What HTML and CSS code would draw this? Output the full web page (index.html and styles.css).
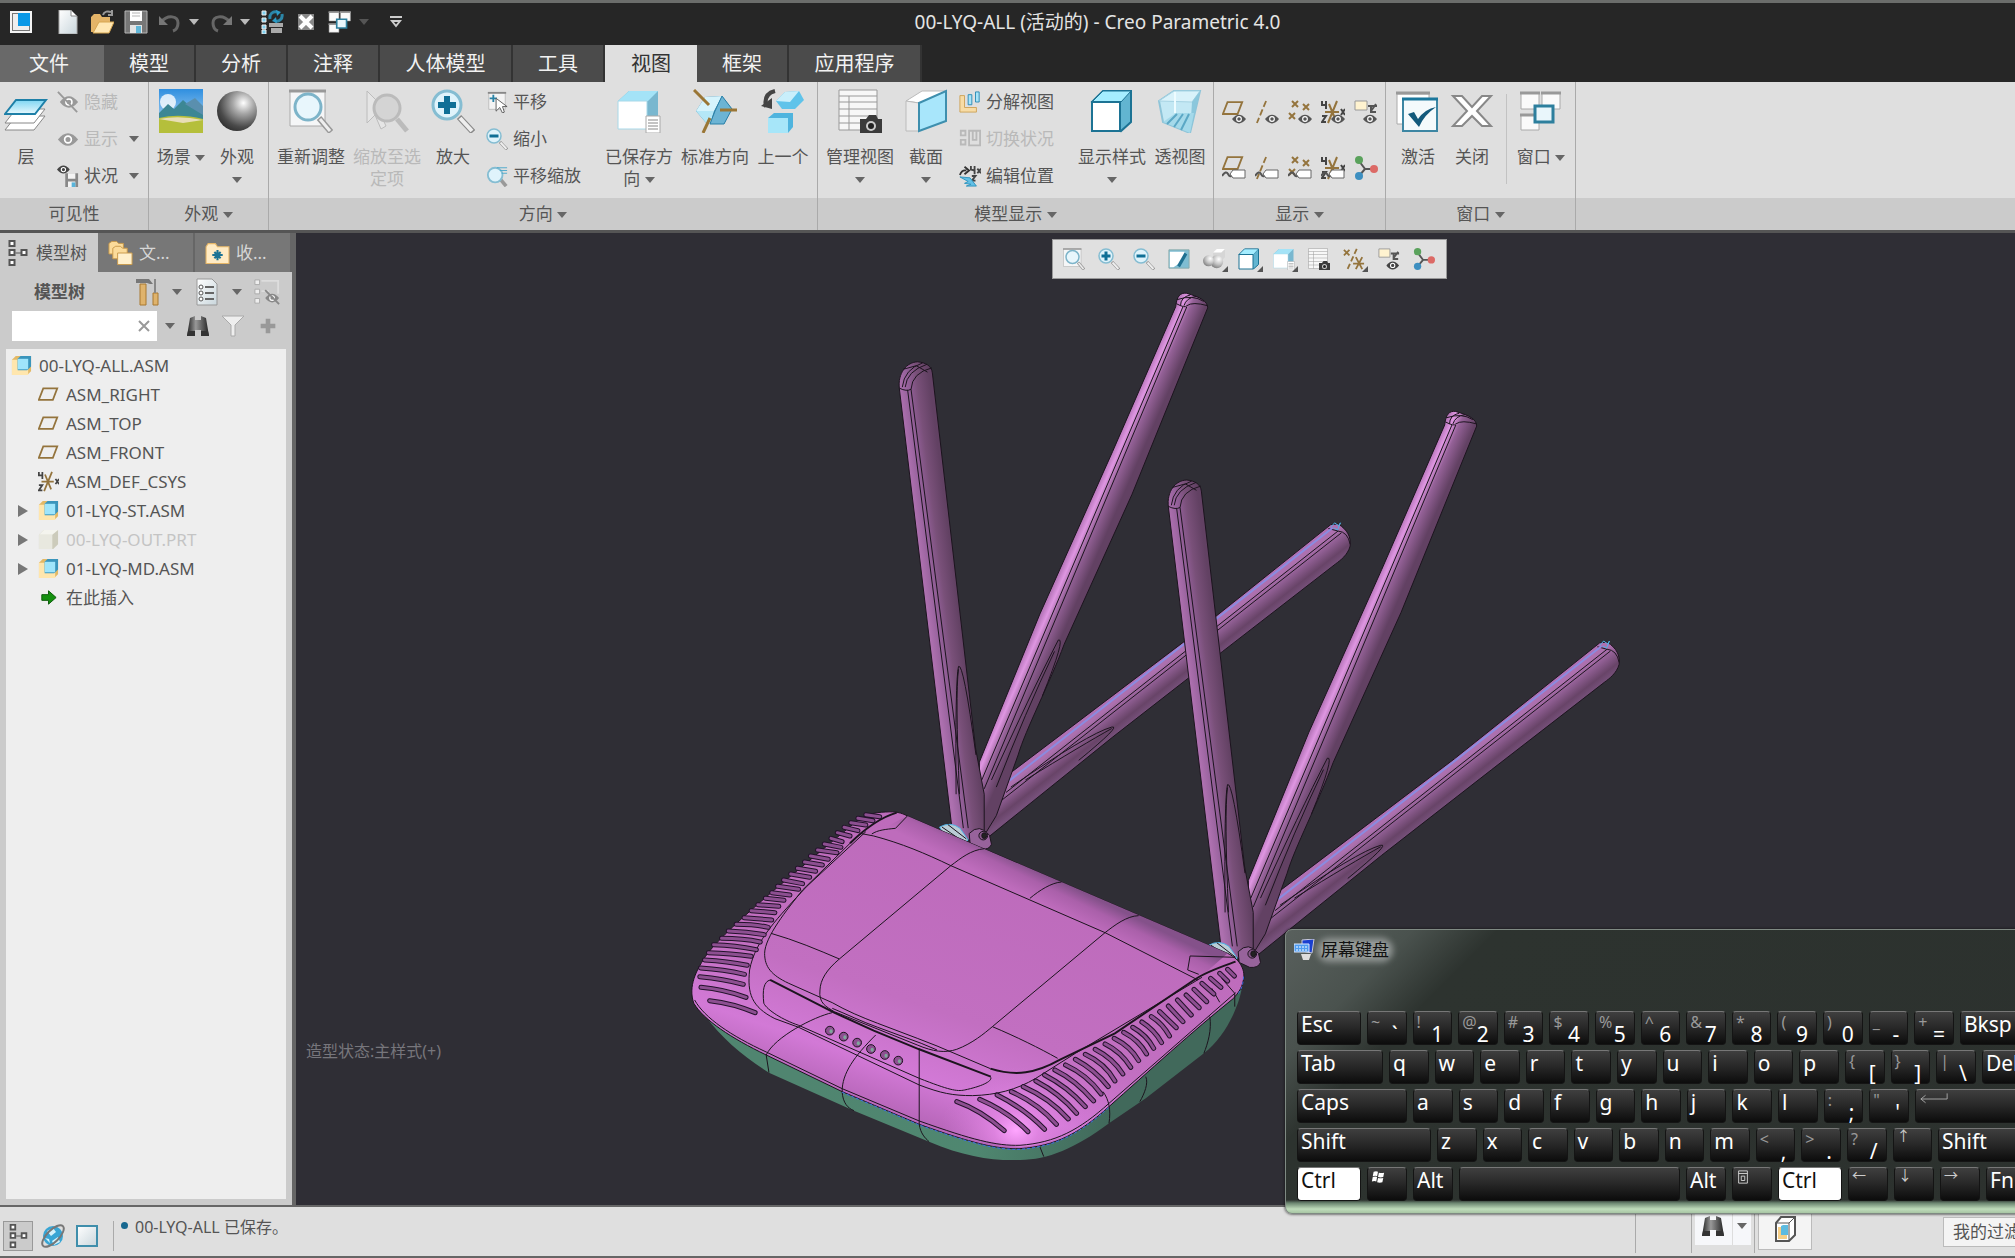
FILE: index.html
```html
<!DOCTYPE html>
<html lang="zh-CN">
<head>
<meta charset="utf-8">
<title>00-LYQ-ALL (活动的) - Creo Parametric 4.0</title>
<link rel="stylesheet" href="styles.css">
</head>
<body>
<svg class="defs" aria-hidden="true">
  <defs>
    <linearGradient id="gBlue" x1="0" y1="0" x2="0" y2="1"><stop offset="0" stop-color="#7fd6f3"/><stop offset="1" stop-color="#e8f8fd"/></linearGradient>
    <linearGradient id="gPaper" x1="0" y1="0" x2="1" y2="1"><stop offset="0" stop-color="#fff"/><stop offset="1" stop-color="#c9d6dc"/></linearGradient>
    <linearGradient id="gSky" x1="0" y1="0" x2="0" y2="1"><stop offset="0" stop-color="#2f8fe0"/><stop offset="1" stop-color="#cfe6f5"/></linearGradient>
    <radialGradient id="gBall" cx=".66" cy=".3" r=".75"><stop offset="0" stop-color="#fff"/><stop offset=".35" stop-color="#a8a8a8"/><stop offset=".8" stop-color="#4a4a4a"/><stop offset="1" stop-color="#333"/></radialGradient>
    <radialGradient id="gBallLite" cx=".66" cy=".3" r=".8"><stop offset="0" stop-color="#fff"/><stop offset=".5" stop-color="#c4c4c4"/><stop offset="1" stop-color="#777"/></radialGradient>
    <linearGradient id="gBin" x1="0" y1="0" x2="1" y2="0"><stop offset="0" stop-color="#222"/><stop offset=".4" stop-color="#999"/><stop offset="1" stop-color="#222"/></linearGradient>
    <symbol id="eye" viewBox="0 0 24 16"><path d="M0 8Q12-7 24 8Q12 23 0 8Z" fill="currentColor"/><circle cx="12" cy="8" r="4" fill="currentColor" stroke="#fff" stroke-width="2"/></symbol>
    <symbol id="creo" viewBox="0 0 24 24"><path d="M1 1h22v22H1z" fill="#f4f4f4"/><path d="M3 3h18v18H3z" fill="#777"/><path d="M4 4h16v16H4z" fill="#eee"/><path d="M9 3h12v13H9z" fill="#0a98e6"/></symbol>
    <symbol id="doc" viewBox="0 0 24 24"><path d="M3 0h12l6 6v18H3z" fill="url(#gPaper)" stroke="#aaa"/><path d="M15 0v6h6z" fill="#fff" stroke="#888"/></symbol>
    <symbol id="open" viewBox="0 0 24 24"><path d="M1 22V7l3-3h6l2 3h8v15z" fill="#e4b468"/><path d="M3 23l6-11h15l-5 11z" fill="#ffe7b3" stroke="#d7a650"/><path d="M13 5c1-4 5-4 8-3M22 0v5h-4" fill="none" stroke="#999" stroke-width="2"/></symbol>
    <symbol id="save" viewBox="0 0 24 24"><path d="M1 1h22v22H1z" fill="#777" stroke="#b5b5b5"/><path d="M6 1h12v10H6z" fill="#fff"/><path d="M8 3h8M8 6h8" stroke="#b5b5b5"/><path d="M6 15h12v8H6z" fill="#e4e4e4"/><path d="M12 16h5v7h-5z" fill="#62b7d8"/></symbol>
    <symbol id="undo" viewBox="0 0 24 24"><path d="M3 12C10 4 20 6 20 13c0 4-2 7-5 8" fill="none" stroke="#666" stroke-width="3"/><path d="M1 6v9h9z" fill="#777"/></symbol>
    <symbol id="redo" viewBox="0 0 24 24"><path d="M21 12C14 4 4 6 4 13c0 4 2 7 5 8" fill="none" stroke="#666" stroke-width="3"/><path d="M23 6v9h-9z" fill="#777"/></symbol>
    <symbol id="regen" viewBox="0 0 24 24"><path d="M2 1h4v4H2zM2 8h4v4H2zM2 15h4v4H2zM2 20h4v4H2z" fill="#7ed0ef" stroke="#eee"/><path d="M9 13h14v4H9zM11 18h11v5H11z" fill="#aaa"/><path d="M10 9c-1-5 3-8 7-7M22 4c1 5-3 8-7 7" fill="none" stroke="#2c86a8" stroke-width="3"/><path d="M16 0l5 2-4 4zM16 7l-4 4 5 2z" fill="#2c9bc6"/></symbol>
    <symbol id="winx" viewBox="0 0 24 24"><path d="M4 4h16v16H4z" fill="#888"/><path d="M6 6l12 12M18 6L6 18" stroke="#fff" stroke-width="4"/></symbol>
    <symbol id="wins" viewBox="0 0 44 44"><g fill="#fafafa" stroke="#aaa"><path d="M2 4h18v16H2zM23 4h18v16H23zM2 26h18v15H2z"/></g><path d="M1 4h20M22 4h20M1 26h20" stroke="#999" stroke-width="3"/><path d="M16 17h18v16H16z" fill="#e9f6fb" stroke="#2d7f9d" stroke-width="3"/></symbol>
    <symbol id="layers" viewBox="0 0 44 44"><g fill="#fff" stroke="#888"><path d="M12 27h29L30 41H1z"/><path d="M12 20h29L30 34H1z"/></g><path d="M12 11h30L31 25H1z" fill="url(#gBlue)" stroke="#1e80a8" stroke-width="2"/></symbol>
    <symbol id="hide" viewBox="0 0 24 24"><g color="#999"><use href="#eye" x="3" y="5" width="20" height="14"/></g><path d="M1 1l21 22" stroke="#999" stroke-width="2"/></symbol>
    <symbol id="show" viewBox="0 0 24 24"><g color="#999"><use href="#eye" x="1" y="5" width="22" height="15"/></g></symbol>
    <symbol id="state" viewBox="0 0 24 24"><g color="#444"><use href="#eye" x="0" y="0" width="14" height="10"/></g><path d="M9 9h14v15H9z" fill="#888"/><path d="M12 9h8v6h-8zM12 18h8v6h-8z" fill="#f4f4f4"/><path d="M16 19h4v5h-4z" fill="#59b4da"/></symbol>
    <symbol id="scene" viewBox="0 0 44 44"><path d="M0 0h44v44H0z" fill="url(#gSky)"/><circle cx="9" cy="13" r="8" fill="#fff" opacity=".8"/><path d="M0 24l9-9 6 5 9-9 9 8 6-5 5 5v15H0z" fill="#3c8794"/><path d="M26 15l10-6 8 8v9z" fill="#5a8fae"/><path d="M0 29q20-5 44 1v14H0z" fill="#b5bf3b"/><path d="M0 30q20-4 44 1l-20 3z" fill="#e8deb6"/></symbol>
    <symbol id="ball" viewBox="0 0 44 44"><circle cx="22" cy="22" r="20" fill="url(#gBall)"/></symbol>
    <symbol id="refit" viewBox="0 0 44 44"><path d="M1 2h35v35H1z" fill="#f5f6f7" stroke="#aaa"/><path d="M0 2h37" stroke="#999" stroke-width="3"/><path d="M30 29l12 14" stroke="#999" stroke-width="6"/><path d="M31 30l10 12" stroke="#eee" stroke-width="3"/><circle cx="19" cy="18" r="13" fill="#e8f6fc" stroke="#7db4c9" stroke-width="3"/></symbol>
    <symbol id="refitsel" viewBox="0 0 44 44"><path d="M2 2v32l8-8 6 14 5-3-6-13h9z" fill="#e5e5e5" stroke="#bcbcbc"/><path d="M32 30l10 12" stroke="#bbb" stroke-width="5"/><circle cx="22" cy="19" r="13" fill="#d4d4d4" stroke="#bbb" stroke-width="3"/></symbol>
    <symbol id="zin" viewBox="0 0 44 44"><path d="M28 28l14 15" stroke="#888" stroke-width="6"/><path d="M29 29l12 13" stroke="#eee" stroke-width="4"/><circle cx="16" cy="16" r="14" fill="#dff3fb" stroke="#85bdd2" stroke-width="3"/><path d="M16 7v18M7 16h18" stroke="#0f6f96" stroke-width="6"/></symbol>
    <symbol id="zout" viewBox="0 0 44 44"><path d="M28 28l14 15" stroke="#888" stroke-width="6"/><path d="M29 29l12 13" stroke="#eee" stroke-width="4"/><circle cx="16" cy="16" r="14" fill="#dff3fb" stroke="#85bdd2" stroke-width="3"/><path d="M7 16h18" stroke="#0f6f96" stroke-width="6"/></symbol>
    <symbol id="pan" viewBox="0 0 24 24"><path d="M3 2h18v18H3z" fill="#f4f4f4" stroke="#bbb"/><path d="M2 2h20" stroke="#888" stroke-width="2"/><path d="M8 4v8M4 8h8" stroke="#2b83a6" stroke-width="2"/><path d="M11 8v14l4-4 3 6 2-1-2-6h5z" fill="#fff" stroke="#555"/></symbol>
    <symbol id="panzoom" viewBox="0 0 24 24"><path d="M16 16l6 7" stroke="#999" stroke-width="4"/><circle cx="10" cy="11" r="8" fill="#dff3fb" stroke="#85bdd2" stroke-width="2"/><path d="M12 3h11M15 6h8M17 9h6" stroke="#49a7cb"/></symbol>
    <symbol id="saved" viewBox="0 0 44 44"><path d="M1 12L12 2h29v30l-10 8z" fill="#79b7cf"/><path d="M1 12L12 2h29l-10 10z" fill="#a4e3f7"/><path d="M1 12h29v28H1z" fill="#fff" stroke="#a8d8e8"/><path d="M29 27h14v17H29z" fill="#fff" stroke="#aaa"/><path d="M31 31h10M31 34h10M31 37h10M31 40h10" stroke="#888"/></symbol>
    <symbol id="stdori" viewBox="0 0 44 44"><path d="M3 22L12 8l17-1 10 13-8 15H14z" fill="#3a87ae"/><path d="M3 22L12 8l17-1-8 15z" fill="#d5f3fc"/><path d="M3 22h18l-4 13h-3z" fill="#b4e7f7"/><path d="M29 7l10 13-8 15H17l5-13z" fill="#6cb4d4" stroke="#2b81a8"/><path d="M1 1l15 15M27 21h18M17 29l-7 15" stroke="#9a7635" stroke-width="3"/></symbol>
    <symbol id="prev" viewBox="0 0 44 44"><path d="M14 2C6 4 3 9 5 18" fill="none" stroke="#444" stroke-width="4"/><path d="M0 17l11 3V9z" fill="#444"/><path d="M15 12l9-9 14-1 5 9-9 9H21z" fill="#5fc3ea"/><path d="M15 12l9-9 14-1-9 11z" fill="#c9effb"/><path d="M7 29l6-5h19v14l-5 6H7z" fill="#4fb4de"/><path d="M7 29h20v15H7z" fill="#a7e6f9"/></symbol>
    <symbol id="mgview" viewBox="0 0 44 44"><path d="M1 1h38v40H1z" fill="#f7f7f7" stroke="#999"/><path d="M1 7h38M1 13h38M1 20h38M1 27h38M1 34h38M11 7v34" stroke="#999"/><path d="M22 30h6l3-4h7l2 4h4v14H22z" fill="#3b3b3b"/><circle cx="33" cy="37" r="5" fill="#ccc"/><circle cx="33" cy="37" r="3" fill="#222"/></symbol>
    <symbol id="section" viewBox="0 0 44 44"><path d="M2 12L18 2h24L15 14z" fill="#fff" stroke="#bbb"/><path d="M2 12l13 2v28H2z" fill="#eaeaea" stroke="#bbb"/><path d="M15 14L42 2v30L15 42z" fill="#a8e6fb" stroke="#3e8fae" stroke-width="2"/></symbol>
    <symbol id="explode" viewBox="0 0 24 24"><path d="M1 5h5v13h13v5H1z" fill="#f7dca6" stroke="#cda256"/><path d="M10 4h4v11h-4zM18 1h4v11h-4z" fill="#a8e4f8" stroke="#2789b3"/></symbol>
    <symbol id="switchst" viewBox="0 0 24 24"><g fill="none" stroke="#b9b9b9" stroke-width="2"><path d="M2 3h5v5H2zM2 13h5v5H2zM11 3h12v16H11zM15 3v10h4V3"/></g></symbol>
    <symbol id="editpos" viewBox="0 0 24 24"><path d="M1 11q2-6 7-5M6 2l5 4-5 4" fill="none" stroke="#333" stroke-width="2"/><path d="M13 1v4l4 1V1M17 4v6M14 12h4l-4 5h4M20 4l4 5M24 4l-4 5" fill="none" stroke="#444" stroke-width="2"/><path d="M1 13l11 1 7 9H8l5-2-7-1 4-2z" fill="#63c0e6" stroke="#2c93bd"/></symbol>
    <symbol id="cube" viewBox="0 0 44 44"><path d="M2 13L13 2h28v31L31 42z" fill="#62b5d1" stroke="#1c7394" stroke-width="2"/><path d="M2 13L13 2h28L31 13z" fill="#a5edff" stroke="#1c7394"/><path d="M2 13h28v29H2z" fill="#fff" stroke="#1c7394" stroke-width="2"/></symbol>
    <symbol id="persp" viewBox="0 0 44 44"><path d="M1 12L16 2h26l-10 42-27-11z" fill="#c3e8f4" stroke="#8ec4d8" stroke-width="2"/><path d="M1 12L16 2h26l-8 11z" fill="#d9f2fa" stroke="#a6d3e3"/><path d="M34 13l8-11-10 42z" fill="#8bc7dc"/><path d="M5 33l13-9h18l-4 20z" fill="#a4d9ea"/><path d="M9 35l10-10M16 38l9-13M23 41l8-16" stroke="#5ba7c5" stroke-width="2"/><path d="M17 3v21" stroke="#eefcff" stroke-width="2"/></symbol>
    <symbol id="tag" viewBox="0 0 24 12"><path d="M0 8q4-6 6-2t5 1" fill="none" stroke="#555" stroke-width="2"/><path d="M11 2h12v8H11l-3-4z" fill="#fff" stroke="#666"/></symbol>
    <symbol id="plane" viewBox="0 0 24 16"><path d="M6 1h16l-5 13H1z" fill="none" stroke="#94743d" stroke-width="2"/></symbol>
    <symbol id="axis" viewBox="0 0 12 24"><path d="M11 0L1 24" stroke="#94743d" stroke-width="2" stroke-dasharray="7 3"/></symbol>
    <symbol id="pts" viewBox="0 0 24 24"><path d="M4 1l6 6M10 1l-6 6M15 4l6 6M21 4l-6 6M1 13l6 6M7 13l-6 6" stroke="#94743d" stroke-width="2"/></symbol>
    <symbol id="csys" viewBox="0 0 24 24"><path d="M4 12h14M8 4l7 17M16 1L7 23" stroke="#94743d" stroke-width="2"/><path d="M1 1v4h4M5 1v8M1 16h4l-4 6h4M20 9l4 6M24 9l-4 6" fill="none" stroke="#444" stroke-width="2"/></symbol>
    <symbol id="note" viewBox="0 0 24 24"><path d="M1 1h12v9H1z" fill="#fff3d0" stroke="#999"/><path d="M14 6h9M22 4l-5 7M17 7v5h5" fill="none" stroke="#555" stroke-width="2"/></symbol>
    <symbol id="planeE" viewBox="0 0 24 24"><use href="#plane" y="1" width="22" height="15"/><use href="#eye" x="10" y="14" width="14" height="10"/></symbol>
    <symbol id="axisE" viewBox="0 0 24 24"><use href="#axis" x="1" width="11" height="24"/><use href="#eye" x="10" y="14" width="14" height="10"/></symbol>
    <symbol id="ptsE" viewBox="0 0 24 24"><use href="#pts" width="24" height="24"/><use href="#eye" x="10" y="14" width="14" height="10"/></symbol>
    <symbol id="csysE" viewBox="0 0 24 24"><use href="#csys" width="24" height="24"/><use href="#eye" x="10" y="14" width="14" height="10"/></symbol>
    <symbol id="noteE" viewBox="0 0 24 24"><use href="#note" width="24" height="24"/><use href="#eye" x="9" y="14" width="14" height="10"/></symbol>
    <symbol id="planeT" viewBox="0 0 24 24"><use href="#plane" width="22" height="15"/><use href="#tag" y="12" width="24" height="12"/></symbol>
    <symbol id="axisT" viewBox="0 0 24 24"><use href="#axis" x="1" width="11" height="24"/><use href="#tag" y="12" width="24" height="12"/></symbol>
    <symbol id="ptsT" viewBox="0 0 24 24"><use href="#pts" width="24" height="24"/><use href="#tag" y="12" width="24" height="12"/></symbol>
    <symbol id="csysT" viewBox="0 0 24 24"><use href="#csys" width="24" height="24"/><use href="#tag" y="12" width="24" height="12"/></symbol>
    <symbol id="spin" viewBox="0 0 24 24"><path d="M5 5l6 8-6 7M11 13h9" fill="none" stroke="#555" stroke-width="2"/><circle cx="5" cy="4" r="4" fill="#5aa25c"/><circle cx="5" cy="20" r="4" fill="#3d8fc0"/><circle cx="20" cy="13" r="4" fill="#dc6a66"/></symbol>
    <symbol id="activate" viewBox="0 0 44 44"><path d="M1 5h32v30H1z" fill="#fff" stroke="#aaa"/><path d="M0 4h34" stroke="#999" stroke-width="3"/><path d="M7 10h34v32H7z" fill="#f4fafc" stroke="#3d86a3" stroke-width="2"/><path d="M6 10h36" stroke="#1b779c" stroke-width="3"/><path d="M12 25l6-2 4 7q7-10 18-12-12 8-17 20z" fill="#135a7c"/></symbol>
    <symbol id="closex" viewBox="0 0 44 44"><path d="M3 7h9l10 11L32 7h9L27 22l14 15h-9L22 27 12 37H3l14-15z" fill="#fff" stroke="#888" stroke-width="2"/></symbol>
    <symbol id="repaint" viewBox="0 0 24 24"><path d="M1 2h22v20H1z" fill="#7fbdd2" stroke="#8aa"/><path d="M2 4h16q1 10-12 17H2z" fill="#fff"/><path d="M18 5l3 2-8 14-3-2z" fill="#1f7090"/></symbol>
    <symbol id="render" viewBox="0 0 24 24"><path d="M11 5l4-4h9v9l-4 4h-9z" fill="#d6d6d6"/><path d="M11 5l4-4h9l-4 4z" fill="#fff"/><circle cx="15" cy="15" r="7" fill="url(#gBallLite)"/><circle cx="6" cy="14" r="6" fill="url(#gBallLite)"/></symbol>
    <symbol id="datum" viewBox="0 0 24 24"><path d="M1 2l6 6M7 2L1 8" stroke="#94743d" stroke-width="2"/><path d="M15 1L5 23" stroke="#94743d" stroke-width="2" stroke-dasharray="6 3"/><path d="M11 17h12M14 10l7 13M21 10l-7 13" stroke="#94743d" stroke-width="2"/></symbol>
    <symbol id="treei" viewBox="0 0 24 26"><path d="M4 1h5v5H4zM4 10h5v5H4zM4 20h5v5H4zM16 10h5v5h-5z" fill="#fff" stroke="#555" stroke-width="2"/><path d="M10 13h6" stroke="#555"/></symbol>
    <symbol id="folders" viewBox="0 0 26 26"><g fill="#fbdb9a" stroke="#c99a4c"><path d="M1 3l3-2h5l2 2h5v11H1z"/><path d="M5 8l3-2h5l2 2h5v11H5z"/><path d="M10 13h15v12H10z" fill="#fff0cc"/></g></symbol>
    <symbol id="fav" viewBox="0 0 24 24"><path d="M1 6l2-3h7l2 3h11v16H1z" fill="#ffebc4" stroke="#e6b667"/><path d="M12 9v10M7 14h10M9 11l6 6M15 11l-6 6" stroke="#1c7394" stroke-width="2"/></symbol>
    <symbol id="tools" viewBox="0 0 24 28"><path d="M1 1h13l4 5h-3l-3-1H1z" fill="#777"/><path d="M5 6h6v21H5zM18 15h5v12h-5z" fill="#dfb36c" stroke="#a87930"/><path d="M20 1v14" stroke="#888" stroke-width="2"/></symbol>
    <symbol id="list" viewBox="0 0 24 28"><path d="M2 1h15l5 5v21H2z" fill="url(#gPaper)" stroke="#999"/><path d="M10 9h9M10 15h9M10 21h9" stroke="#666" stroke-width="2"/><g fill="#fff" stroke="#555"><circle cx="6" cy="9" r="2"/><circle cx="6" cy="15" r="2"/><circle cx="6" cy="21" r="2"/></g></symbol>
    <symbol id="treehide" viewBox="0 0 28 28"><path d="M1 1h5v5H1zM1 11h5v5H1zM1 21h5v5H1z" fill="#eee" stroke="#aaa"/><path d="M8 2h18v14M8 13h8" fill="none" stroke="#ddd" stroke-width="2"/><g color="#888"><use href="#eye" x="12" y="15" width="15" height="11"/></g><path d="M12 12l15 15" stroke="#888" stroke-width="2"/></symbol>
    <symbol id="bin" viewBox="0 0 24 22"><path d="M4 3l5-2v4h6V1l5 2 3 18h-8v-6H9v6H1z" fill="url(#gBin)"/><path d="M2 16h7v5H1zM15 16h7l1 5h-8z" fill="#333"/></symbol>
    <symbol id="funnel" viewBox="0 0 24 22"><path d="M1 1h22l-9 9v11h-4V10z" fill="#eee" stroke="#aaa"/></symbol>
    <symbol id="asm" viewBox="0 0 22 22"><path d="M1 5l4-4h16v16l-4 4H1z" fill="#e3b966"/><path d="M1 5h6v10h11v6H1z" fill="#ffe6ad"/><path d="M7 4l3-3h11v11l-4 4H7z" fill="#3a95bc"/><path d="M7 4h11v11H7z" fill="#9fe5fb"/></symbol>
    <symbol id="prt" viewBox="0 0 22 22"><path d="M1 6l5-5h15v15l-5 5H1z" fill="#cccbbb"/><path d="M1 6h14v15H1z" fill="#e8e8df"/><path d="M1 6l5-5h15l-6 5z" fill="#f4f4ee"/></symbol>
    <symbol id="ins" viewBox="0 0 22 22"><path d="M4 8h7V4l8 7-8 7v-4H4z" fill="#14900f" stroke="#0b5a08"/></symbol>
    <symbol id="globe" viewBox="0 0 24 24"><circle cx="12" cy="12" r="10" fill="#38a5d4"/><path d="M6 7l6-3 3 4-5 4zM11 17l6-4 2 5-6 3zM4 14l4 1 1 4z" fill="#d4f2fb"/><ellipse cx="12" cy="12" rx="14" ry="6" transform="rotate(-45 12 12)" fill="none" stroke="#777" stroke-width="2"/></symbol>
    <symbol id="sq" viewBox="0 0 24 24"><path d="M2 2h20v20H2z" fill="url(#gPaper)" stroke="#3f8eab" stroke-width="2"/></symbol>
    <symbol id="selbox" viewBox="0 0 24 28"><path d="M3 8l5-6h14v18l-6 6H3z" fill="#fff" stroke="#555" stroke-width="2"/><path d="M16 26V8l6-6M3 8h13" fill="none" stroke="#555"/><path d="M5 12h9v12H5z" fill="#f7cf86"/><path d="M8 11l2-1h5v10H8z" fill="#5dbbe0"/></symbol>
    <symbol id="osk" viewBox="0 0 22 22"><path d="M8 1l12-1-2 14-10-2z" fill="#1a3fd0" stroke="#ccd"/><path d="M0 5h15v8H0z" fill="#4f9cf0" stroke="#dbe8ff"/><path d="M2 8h11M2 11h11" stroke="#fff" stroke-dasharray="2 1"/><path d="M7 15h10l-2 6H9z" fill="#ddd"/></symbol>
    <symbol id="flag" viewBox="0 0 16 16"><path d="M3 2q3-1 5 0L7 7q-2-1-5 0zM9 3q3 1 6 0l-1 5q-3 1-6 0zM2 8q3-1 5 0l-1 5q-2-1-5 0zM8 9q3 1 6 0l-1 5q-3 1-6 0z" fill="#fff"/></symbol>
    <symbol id="menu" viewBox="0 0 12 16"><path d="M1 1h10v14H1zM1 4h10M4 7h4v5H4z" fill="none" stroke="#ddd"/></symbol>
    <symbol id="enter" viewBox="0 0 32 12"><path d="M30 0v6H2M7 2L2 6l5 4" fill="none" stroke="#aaa"/></symbol>
  </defs>
</svg>

<div class="app">
  <header class="titlebar">
    <nav class="quick" aria-label="快速访问">
      <button aria-label="Creo"><svg><use href="#creo"/></svg></button><i class="vr"></i>
      <button aria-label="新建"><svg><use href="#doc"/></svg></button>
      <button aria-label="打开"><svg><use href="#open"/></svg></button>
      <button aria-label="保存"><svg><use href="#save"/></svg></button>
      <button aria-label="撤消"><svg><use href="#undo"/></svg></button><i class="dn lite"></i>
      <button aria-label="重做"><svg><use href="#redo"/></svg></button><i class="dn lite"></i>
      <button aria-label="重新生成"><svg><use href="#regen"/></svg></button>
      <button aria-label="关闭窗口"><svg><use href="#winx"/></svg></button>
      <button aria-label="窗口"><svg><use href="#wins"/></svg></button><i class="dn dim"></i><i class="vr"></i>
      <button class="more" aria-label="自定义"><svg viewBox="0 0 12 12"><path d="M0 1h12M2 5h8l-4 5z" fill="none" stroke="#ccc" stroke-width="2"/></svg></button>
    </nav>
    <h1>00-LYQ-ALL (活动的) - Creo Parametric 4.0</h1>
  </header>

  <nav class="tabs">
    <button class="file">文件</button><button>模型</button><button>分析</button><button>注释</button><button class="wide">人体模型</button><button>工具</button><button class="on">视图</button><button>框架</button><button class="wide">应用程序</button>
  </nav>

  <section class="ribbon">
    <div class="group g1">
      <div class="tools">
        <button class="big w52"><svg><use href="#layers"/></svg><span>层</span></button>
        <div class="stack">
          <button disabled><svg><use href="#hide"/></svg>隐藏</button>
          <button disabled><svg><use href="#show"/></svg>显示<i class="dn push"></i></button>
          <button><svg><use href="#state"/></svg>状况<i class="dn push"></i></button>
        </div>
      </div>
      <h2>可见性</h2>
    </div>
    <div class="group g2">
      <div class="tools">
        <button class="big w56"><svg><use href="#scene"/></svg><span>场景 <i class="dn"></i></span></button>
        <button class="big w56"><svg><use href="#ball"/></svg><span>外观<br><i class="dn"></i></span></button>
      </div>
      <h2>外观 <i class="dn"></i></h2>
    </div>
    <div class="group g3">
      <div class="tools">
        <button class="big w76"><svg><use href="#refit"/></svg><span>重新调整</span></button>
        <button class="big w76" disabled><svg><use href="#refitsel"/></svg><span>缩放至选<br>定项</span></button>
        <button class="big w56"><svg><use href="#zin"/></svg><span>放大</span></button>
        <div class="stack">
          <button><svg><use href="#pan"/></svg>平移</button>
          <button><svg><use href="#zout"/></svg>缩小</button>
          <button><svg><use href="#panzoom"/></svg>平移缩放</button>
        </div>
        <i class="sep"></i>
        <button class="big w76"><svg><use href="#saved"/></svg><span>已保存方<br>向 <i class="dn"></i></span></button>
        <button class="big w76"><svg><use href="#stdori"/></svg><span>标准方向</span></button>
        <button class="big w60"><svg><use href="#prev"/></svg><span>上一个</span></button>
      </div>
      <h2>方向 <i class="dn"></i></h2>
    </div>
    <div class="group g4">
      <div class="tools">
        <button class="big w76"><svg><use href="#mgview"/></svg><span>管理视图<br><i class="dn"></i></span></button>
        <button class="big w56"><svg><use href="#section"/></svg><span>截面<br><i class="dn"></i></span></button>
        <div class="stack">
          <button><svg><use href="#explode"/></svg>分解视图</button>
          <button disabled><svg><use href="#switchst"/></svg>切换状况</button>
          <button><svg><use href="#editpos"/></svg>编辑位置</button>
        </div>
        <i class="sep"></i>
        <button class="big w76"><svg><use href="#cube"/></svg><span>显示样式<br><i class="dn"></i></span></button>
        <button class="big w60"><svg><use href="#persp"/></svg><span>透视图</span></button>
      </div>
      <h2>模型显示 <i class="dn"></i></h2>
    </div>
    <div class="group g5">
      <div class="matrix">
        <button aria-label="平面显示"><svg><use href="#planeE"/></svg></button><button aria-label="轴显示"><svg><use href="#axisE"/></svg></button><button aria-label="点显示"><svg><use href="#ptsE"/></svg></button><button aria-label="坐标系显示"><svg><use href="#csysE"/></svg></button><button aria-label="注释显示"><svg><use href="#noteE"/></svg></button>
        <button aria-label="平面标记"><svg><use href="#planeT"/></svg></button><button aria-label="轴标记"><svg><use href="#axisT"/></svg></button><button aria-label="点标记"><svg><use href="#ptsT"/></svg></button><button aria-label="坐标系标记"><svg><use href="#csysT"/></svg></button><button aria-label="旋转中心"><svg><use href="#spin"/></svg></button>
      </div>
      <h2>显示 <i class="dn"></i></h2>
    </div>
    <div class="group g6">
      <div class="tools">
        <button class="big w56"><svg><use href="#activate"/></svg><span>激活</span></button>
        <button class="big w52"><svg><use href="#closex"/></svg><span>关闭</span></button>
        <i class="sep"></i>
        <button class="big w60"><svg><use href="#wins"/></svg><span>窗口 <i class="dn"></i></span></button>
      </div>
      <h2>窗口 <i class="dn"></i></h2>
    </div>
    <div class="group rest"><div class="tools"></div><h2></h2></div>
  </section>

  <main class="work">
    <aside class="side">
      <nav class="sidetabs">
        <button class="on"><svg><use href="#treei"/></svg>模型树</button>
        <button><svg><use href="#folders"/></svg>文...</button>
        <button><svg><use href="#fav"/></svg>收...</button>
      </nav>
      <div class="sidehead">
        <h2>模型树</h2>
        <button aria-label="设置"><svg><use href="#tools"/></svg></button><i class="dn"></i>
        <button aria-label="显示"><svg><use href="#list"/></svg></button><i class="dn"></i>
        <button aria-label="隐藏树"><svg><use href="#treehide"/></svg></button>
      </div>
      <div class="search">
        <div class="field"><input type="text" size="1" aria-label="搜索模型树"><button aria-label="清除"><svg viewBox="0 0 12 12"><path d="M1 1l10 10M11 1L1 11" stroke="#999" stroke-width="2"/></svg></button></div>
        <i class="dn"></i>
        <button aria-label="查找"><svg><use href="#bin"/></svg></button>
        <button aria-label="过滤"><svg><use href="#funnel"/></svg></button>
        <button aria-label="添加"><svg viewBox="0 0 24 24"><path d="M12 4v16M4 12h16" stroke="#999" stroke-width="5"/></svg></button>
      </div>
      <ul class="tree">
        <li class="root"><svg><use href="#asm"/></svg>00-LYQ-ALL.ASM</li>
        <li><b></b><svg><use href="#plane"/></svg>ASM_RIGHT</li>
        <li><b></b><svg><use href="#plane"/></svg>ASM_TOP</li>
        <li><b></b><svg><use href="#plane"/></svg>ASM_FRONT</li>
        <li><b></b><svg><use href="#csys"/></svg>ASM_DEF_CSYS</li>
        <li><b class="tw"></b><svg><use href="#asm"/></svg>01-LYQ-ST.ASM</li>
        <li class="off"><b class="tw"></b><svg><use href="#prt"/></svg>00-LYQ-OUT.PRT</li>
        <li><b class="tw"></b><svg><use href="#asm"/></svg>01-LYQ-MD.ASM</li>
        <li><b></b><svg><use href="#ins"/></svg>在此插入</li>
      </ul>
    </aside>

    <section class="canvas">
      <svg class="model" viewBox="296 233 1719 972" preserveAspectRatio="xMidYMid slice" role="img" aria-label="路由器模型">
        <defs>
          <linearGradient id="a1" gradientUnits="userSpaceOnUse" x1="40" y1="310" x2="104" y2="304"><stop offset="0" stop-color="#ad70af"/><stop offset=".3" stop-color="#94609a"/><stop offset=".6" stop-color="#795079"/><stop offset="1" stop-color="#624163"/></linearGradient>
          <linearGradient id="a2" gradientUnits="userSpaceOnUse" x1="610" y1="75" x2="666" y2="93"><stop offset="0" stop-color="#b877bb"/><stop offset=".2" stop-color="#df96e2"/><stop offset=".36" stop-color="#b87aba"/><stop offset=".5" stop-color="#946197"/><stop offset="1" stop-color="#624163"/></linearGradient>
          <linearGradient id="a3" gradientUnits="userSpaceOnUse" x1="930" y1="685" x2="990" y2="742"><stop offset="0" stop-color="#b070b4"/><stop offset=".25" stop-color="#ac70ae"/><stop offset=".5" stop-color="#8c5c8f"/><stop offset=".8" stop-color="#684468"/><stop offset="1" stop-color="#76507a"/></linearGradient>
          <linearGradient id="body" gradientUnits="userSpaceOnUse" x1="800" y1="200" x2="500" y2="950"><stop offset="0" stop-color="#bd6bbb"/><stop offset=".6" stop-color="#c26fc1"/><stop offset=".85" stop-color="#d279d6"/><stop offset="1" stop-color="#b867ba"/></linearGradient>
          <linearGradient id="roll" gradientUnits="userSpaceOnUse" x1="965" y1="276" x2="925" y2="345"><stop offset="0" stop-color="#84518a"/><stop offset=".4" stop-color="#aa60aa"/><stop offset="1" stop-color="#be6cbc"/></linearGradient>
          <linearGradient id="base" gradientUnits="userSpaceOnUse" x1="300" y1="800" x2="1100" y2="900"><stop offset="0" stop-color="#508570"/><stop offset=".6" stop-color="#4f8770"/><stop offset="1" stop-color="#41695b"/></linearGradient>
          <radialGradient id="shine" gradientUnits="userSpaceOnUse" cx="850" cy="1020" r="190"><stop offset="0" stop-color="#ffa6ff"/><stop offset=".3" stop-color="#e98bea" stop-opacity=".7"/><stop offset="1" stop-color="#d27ad6" stop-opacity="0"/></radialGradient>
          <g id="ants">
            <g class="edge">
              <path fill="url(#a3)" d="M930 685L945 683C965 700 972 720 970 745C965 770 950 785 940 795L707 1040L480 1280L222 1562L215 1530L250 1400L630 1010Z"/>
              <path d="M945 703L260 1435M952 708L250 1458M925 696L945 703Q965 705 970 740M270 1420Q430 1270 478 1252Q500 1245 410 1345M300 1400Q420 1300 478 1256"/>
              <path class="cy" d="M934 694L267 1402"/>
              <path class="tip" d="M930 692l8-12 8 8 4-8-6 20-8-6"/>
            </g>
            <g class="edge">
              <path fill="url(#a2)" d="M610 75C612 45 620 35 632 37C662 48 676 60 676 78L520 600L380 1020C350 1130 300 1260 285 1330L240 1500L213 1560L205 1420V1350L330 935L480 480Z"/>
              <path d="M625 75L210 1400M633 75L215 1425M611 66Q630 80 633 72Q645 60 676 72M613 55Q645 40 668 60M620 72Q620 48 640 42M627 72Q632 50 652 46M230 1400Q310 1160 368 1008Q384 1000 335 1165M240 1420Q300 1210 360 1040"/>
            </g>
            <g class="edge">
              <path fill="url(#a1)" d="M40 305C36 260 55 230 78 229C95 232 106 240 108 260L197 1310L215 1440V1570L190 1575L148 1530Z"/>
              <path d="M57 308L172 1535M64 306L182 1535M40 303Q55 313 64 306Q66 260 107 246M46 300Q50 250 88 232M52 300Q55 255 97 236M48 250L75 240L98 258M157 1440Q155 1120 162 1082Q172 1070 198 1330M164 1440Q155 1160 162 1090"/>
            </g>
            <g class="edge"><path fill="#97639b" d="M184 1550Q205 1520 226 1555L230 1580Q226 1596 208 1594L186 1580Z"/><ellipse cx="213" cy="1556" rx="9" ry="12" fill="#87588a"/><ellipse cx="215" cy="1556" rx="5" ry="8" fill="#222"/><path fill="#b9ccd5" class="tip" d="M123 1532Q145 1515 165 1535L182 1568L170 1580L135 1560Z"/><path d="M128 1532l45 42M140 1525l38 40"/></g>
          </g>
        </defs>
        <g transform="translate(880 280) scale(.4847 .3571)"><use href="#ants"/><use href="#ants" x="555" y="331"/></g>
        <g class="edge" transform="translate(680 790) scale(.3954 .3333)">
          <path class="nb" fill="url(#base)" d="M60 670C100 740 160 800 225 848L440 962L630 1055C720 1100 790 1113 860 1110C930 1110 1000 1075 1085 1000L1178 925L1325 790C1380 740 1412 650 1420 600L700 500Z"/>
          <path fill="url(#body)" d="M520 66C545 64 560 68 575 78L1385 490C1420 510 1430 545 1425 570C1420 600 1410 610 1400 625C1300 720 1180 850 1085 950C1010 1030 950 1068 860 1076C800 1078 740 1060 605 1003L410 905L218 795C130 745 60 690 35 640C20 590 40 540 70 490C130 400 300 240 440 100C465 75 490 67 520 66Z"/>
          <path class="nb" fill="url(#roll)" d="M575 78L1385 490L1310 568L1075 428L685 227C620 190 560 160 490 135Q520 110 575 78Z"/>
          <path class="nb" fill="url(#shine)" d="M600 800L1080 860L1040 990Q950 1066 860 1070Q760 1060 605 995Z"/>
          <path d="M37 630C62 684 130 738 218 786L410 896L605 993C740 1050 800 1068 860 1066C950 1058 1010 1020 1085 940L1405 608"/>
          <path d="M455 130L490 138C560 160 620 190 685 227L1075 428L1310 570M485 132C500 120 520 118 545 115L575 78M1405 502L1290 498L1284 540L1312 553M230 430C290 450 350 480 403 507M790 710C850 740 910 775 955 805M885 325C910 300 940 278 965 276"/>
          <path d="M770 176C735 180 710 205 685 227L403 507C370 540 355 570 354 600C350 640 370 650 390 665L600 765C640 785 670 790 700 778C740 760 770 730 790 710L1075 428C1100 405 1130 378 1160 377"/>
          <path d="M385 668C340 680 240 740 218 795L225 848M495 735C440 800 410 850 410 905C412 940 425 955 440 962M605 775V1003C608 1030 620 1045 630 1055M910 1070L920 1100M1070 905C1085 930 1090 960 1085 1000M1178 860C1185 880 1175 910 1163 935M1340 680C1345 720 1335 760 1325 790M1345 595L1365 637M1370 565L1403 610V650"/>
          <path class="thick" d="M548 68C500 85 460 125 430 160M785 836C850 860 900 850 960 810L1100 730L1300 570C1330 545 1370 530 1405 515"/>
          <path d="M430 160L310 300C270 360 215 440 214 490C214 530 230 555 275 580L385 638C420 662 460 682 500 700L600 745L650 768L785 836M385 655C420 672 460 695 500 712L610 760L650 780M470 125L320 290C250 380 190 450 176 540C170 610 180 650 240 686L300 712L605 885C660 910 690 917 740 917C800 915 850 900 900 865L1000 790L1320 562"/>
          <path d="M228 570C212 575 208 600 212 640C220 660 260 690 300 706L605 865C680 900 700 905 720 900C760 890 790 875 786 862"/><path class="thick" d="M228 570L390 668L490 722L605 778L786 860"/>
          <path class="blue" d="M410 907L605 1005C740 1062 800 1080 860 1078C950 1070 1010 1032 1085 952M1425 560Q1425 590 1410 615"/>
          <path id="slots" class="slot" d="M75 632Q135 640 190 668M53 592Q110 598 167 622M50 560Q110 566 160 583M52 534Q110 538 163 553M62 510Q120 514 170 526M72 488Q130 490 180 499M85 464Q140 466 193 479M105 445Q160 445 203 456M122 423Q170 425 213 434M142 403Q190 403 223 412M162 383L232 390M180 362L240 368M197 344L250 349M216 325L263 331M232 308L278 315M247 289L300 298M262 270L310 281M280 252L328 262M297 235L343 244M315 216L360 225M330 198L375 208M348 180L397 188M365 162L407 172M382 145L410 155M398 128L430 138M415 112L450 122M432 98L470 105M450 85L488 92M470 74L505 80M700 935Q760 960 820 1022M758 928Q830 965 880 1025M802 915Q870 955 922 1018M838 905Q905 940 952 1003M868 890Q935 925 982 987M900 873Q960 910 1003 970M922 855Q980 890 1025 950M948 840Q1000 870 1046 933M975 825Q1030 855 1065 912M1000 808Q1050 840 1083 890M1025 793Q1075 820 1100 873M1050 778Q1095 805 1120 852M1075 762Q1115 785 1140 832M1098 745Q1140 770 1160 812M1122 727Q1160 750 1180 792M1145 712Q1180 735 1198 775M1168 696Q1200 720 1218 758M1192 680Q1220 700 1238 738M1213 665L1255 713M1235 648L1272 695M1258 630L1293 675M1280 615L1313 653M1300 598L1332 635M1320 580L1350 612M1342 565L1368 592M1365 550L1385 573M1385 538L1402 558"/>
          <use href="#slots" class="slotin"/>
          <g fill="#8d4f91"><ellipse cx="379" cy="722" rx="11" ry="13"/><ellipse cx="414" cy="740" rx="11" ry="13"/><ellipse cx="448" cy="758" rx="11" ry="13"/><ellipse cx="483" cy="777" rx="11" ry="13"/><ellipse cx="518" cy="795" rx="11" ry="13"/><ellipse cx="552" cy="812" rx="11" ry="13"/></g>
          <g class="nb" fill="#7ea89b"><ellipse cx="382" cy="724" rx="4" ry="6"/><ellipse cx="417" cy="742" rx="4" ry="6"/><ellipse cx="451" cy="760" rx="4" ry="6"/><ellipse cx="486" cy="779" rx="4" ry="6"/><ellipse cx="521" cy="797" rx="4" ry="6"/><ellipse cx="555" cy="814" rx="4" ry="6"/></g>
        </g>
      </svg>
      <div class="float">
        <button aria-label="重新调整"><svg><use href="#refit"/></svg></button><button aria-label="放大"><svg><use href="#zin"/></svg></button><button aria-label="缩小"><svg><use href="#zout"/></svg></button><button aria-label="重画"><svg><use href="#repaint"/></svg></button><button class="drop" aria-label="渲染"><svg><use href="#render"/></svg></button><button class="drop" aria-label="显示样式"><svg><use href="#cube"/></svg></button><button class="drop" aria-label="已保存方向"><svg><use href="#saved"/></svg></button><button aria-label="视图管理器"><svg><use href="#mgview"/></svg></button><button class="drop" aria-label="基准显示"><svg><use href="#datum"/></svg></button><button aria-label="注释显示"><svg><use href="#noteE"/></svg></button><button aria-label="旋转中心"><svg><use href="#spin"/></svg></button>
      </div>
      <p class="style">造型状态:主样式(+)</p>
    </section>
  </main>

  <footer class="status">
    <button class="pressed" aria-label="模型树"><svg><use href="#treei"/></svg></button>
    <button aria-label="浏览器"><svg><use href="#globe"/></svg></button>
    <button aria-label="全屏"><svg><use href="#sq"/></svg></button>
    <i class="sv"></i>
    <p><i class="dot"></i>00-LYQ-ALL 已保存。</p>
    <div class="right">
      <i class="sv"></i><i class="sv gap"></i>
      <button class="find" aria-label="查找"><svg><use href="#bin"/></svg><span><i class="dn"></i></span></button>
      <i class="sv"></i>
      <button class="box" aria-label="选择"><svg><use href="#selbox"/></svg></button>
      <select aria-label="过滤器"><option>我的过滤器</option></select>
    </div>
  </footer>
</div>

<section class="osk" aria-label="屏幕键盘">
  <header><svg><use href="#osk"/></svg><h2>屏幕键盘</h2></header>
  <div class="keys">
    <div class="row"><button class="k64">Esc</button><button class="two"><sup>~</sup>`</button><button class="two"><sup>!</sup>1</button><button class="two"><sup>@</sup>2</button><button class="two"><sup>#</sup>3</button><button class="two"><sup>$</sup>4</button><button class="two"><sup>%</sup>5</button><button class="two"><sup>^</sup>6</button><button class="two"><sup>&amp;</sup>7</button><button class="two"><sup>*</sup>8</button><button class="two"><sup>(</sup>9</button><button class="two"><sup>)</sup>0</button><button class="two"><sup>_</sup>-</button><button class="two"><sup>+</sup>=</button><button class="k92">Bksp</button></div>
    <div class="row"><button class="k86">Tab</button><button>q</button><button>w</button><button>e</button><button>r</button><button>t</button><button>y</button><button>u</button><button>i</button><button>o</button><button>p</button><button class="two"><sup>{</sup>[</button><button class="two"><sup>}</sup>]</button><button class="two"><sup>|</sup>\</button><button class="k70">Del</button></div>
    <div class="row"><button class="k110">Caps</button><button>a</button><button>s</button><button>d</button><button>f</button><button>g</button><button>h</button><button>j</button><button>k</button><button>l</button><button class="two"><sup>:</sup>;</button><button class="two"><sup>"</sup>'</button><button class="k137" aria-label="Enter"><svg class="ent"><use href="#enter"/></svg></button></div>
    <div class="row"><button class="k134">Shift</button><button>z</button><button>x</button><button>c</button><button>v</button><button>b</button><button>n</button><button>m</button><button class="two"><sup>&lt;</sup>,</button><button class="two"><sup>&gt;</sup>.</button><button class="two"><sup>?</sup>/</button><button><small>↑</small></button><button class="k114">Shift</button></div>
    <div class="row"><button class="k64 lit">Ctrl</button><button class="k40" aria-label="Win"><svg><use href="#flag"/></svg></button><button class="k40">Alt</button><button aria-label="空格"></button><button class="k40">Alt</button><button class="k40" aria-label="菜单"><svg><use href="#menu"/></svg></button><button class="k64 lit">Ctrl</button><button class="k40"><small>←</small></button><button class="k40"><small>↓</small></button><button class="k40"><small>→</small></button><button class="k66">Fn</button></div>
  </div>
</section>
</body>
</html>
```
FILE: styles.css
```css
* { box-sizing: border-box; }
html { height: 100%; }
body {
  position: relative;
  min-height: 100%;
  margin: 0;
  overflow: hidden;
  background: #2f2e35;
  color: #555;
  font-family: "Noto Sans", "Noto Sans CJK SC", sans-serif;
  font-size: 17px;
  line-height: 22px;
}
button {
  display: flex;
  align-items: center;
  padding: 0;
  border: 0;
  background: none;
  color: inherit;
  font: inherit;
  white-space: nowrap;
}
h1, h2, p, ul { margin: 0; padding: 0; font-size: inherit; font-weight: 400; }
svg { display: block; flex: none; }
.defs { position: absolute; width: 0; height: 0; }
.app { display: flex; flex-direction: column; min-height: 100vh; }

.dn {
  display: inline-block;
  width: 0;
  height: 0;
  border: 5px solid transparent;
  border-top: 6px solid #666;
  border-bottom: 0;
  vertical-align: middle;
}
.lite { border-top-color: #bbb; }
.dim { border-top-color: #555; }

/* title bar */
.titlebar {
  display: grid;
  grid-template-columns: 1fr auto 1fr;
  align-items: center;
  height: 45px;
  padding: 0 0 4px;
  border-top: 3px solid #6b6d6b;
  background: #262626;
  color: #e4e4e4;
}
.titlebar h1 { grid-column: 2; font-size: 19px; padding-left: 180px; }
.quick { display: flex; align-items: center; gap: 10px; padding-left: 9px; width: 400px; }
.quick svg { width: 24px; height: 24px; }
.quick .more svg { width: 12px; height: 12px; }
.quick .vr { width: 1px; height: 34px; margin: 0 -1px 0 4px; background: #777; }
.quick .dn { margin-left: -3px; }
.quick .dim + .vr { margin: 0 1px 0 0; }

/* tabs */
.tabs { display: flex; height: 37px; background: #262626; }
.tabs button {
  justify-content: center;
  width: 92px;
  border-right: 2px solid #333;
  background: #4b4b4b;
  color: #f2f2f2;
  font-size: 20px;
}
.tabs .file { width: 104px; padding-right: 6px; border-right: 0; background: #696969; }
.tabs .wide { width: 133px; }
.tabs .on { border: 0; background: #dfdfdf; color: #333; }

/* ribbon */
.ribbon { display: flex; border-bottom: 3px solid #555; background: #dfdfdf; }
.group { display: flex; flex-direction: column; flex: none; border-right: 1px solid #aaa; }
.rest { flex: 1; border: 0; }
.g1 { width: 149px; }
.g2 { width: 120px; }
.g3 { width: 549px; }
.g4 { width: 396px; }
.g5 { width: 172px; }
.g6 { width: 190px; }
.group h2 {
  height: 32px;
  line-height: 32px;
  background: #cbcbcb;
  text-align: center;
}
.tools { display: flex; height: 116px; padding: 4px 4px 0; }
.g1 .tools { padding-left: 0; }
.big { flex-direction: column; flex: none; gap: 13px; padding-top: 3px; text-align: center; }
.big svg { width: 44px; height: 44px; }
.w52 { width: 52px; }
.w56 { width: 56px; }
.w60 { width: 60px; }
.w76 { width: 76px; }
button:disabled { color: #b9b9b9; }
.stack { display: flex; flex-direction: column; padding: 0 4px 0 5px; }
.stack button { height: 37px; gap: 5px; padding-bottom: 6px; }
.stack svg { width: 22px; height: 22px; }
.stack .push { margin-left: 6px; }
.sep { width: 1px; height: 90px; margin: 8px 8px 0; background: #c2c2c2; }
.g6 .sep { margin: 8px 4px 0 8px; }
.matrix { display: grid; grid-template-columns: repeat(5, 33px); height: 116px; padding: 2px 4px 2px 3px; }
.matrix svg { width: 24px; height: 24px; color: #555; }
.matrix button { justify-content: center; }

/* work area */
.work { display: flex; flex: 1; }
.side {
  display: flex;
  flex-direction: column;
  flex: none;
  width: 296px;
  padding-bottom: 6px;
  border-right: 4px solid #666;
  background: #cbcbcb;
}
.sidetabs { display: flex; height: 39px; }
.sidetabs button { flex: 1; gap: 6px; padding-left: 10px; border-right: 2px solid #666; background: #777; color: #d6d6d6; }
.sidetabs .on { flex: 0 0 98px; gap: 6px; padding-left: 5px; border: 0; background: #cbcbcb; color: #555; }
.sidetabs svg { width: 25px; height: 26px; }
.sidehead { display: flex; align-items: center; gap: 12px; height: 39px; padding: 0 12px 0 34px; }
.sidehead h2 { flex: 1; font-weight: 700; }
.sidehead svg { width: 26px; height: 28px; }
.search { display: flex; align-items: center; gap: 11px; height: 30px; padding: 0 12px; }
.search button svg { width: 24px; height: 22px; }
.search .dn { margin-left: -3px; }
.field { display: flex; flex: 1; min-width: 0; height: 30px; background: #fff; }
.field input { flex: 1; min-width: 0; width: 0; border: 0; background: none; }
.field button { width: 26px; justify-content: center; }
.search .field svg { width: 12px; height: 12px; }
.tree {
  flex: 1;
  margin: 8px 6px 0;
  padding-top: 2px;
  background: #eee;
  list-style: none;
}
.tree li { display: flex; align-items: center; gap: 7px; height: 29px; padding-left: 12px; }
.tree .root { padding-left: 5px; }
.tree svg { width: 21px; height: 21px; }
.tree b { width: 13px; height: 12px; }
.tree .tw { width: 0; height: 0; margin-right: 3px; border: 6px solid transparent; border-left: 10px solid #777; border-right: 0; }
.tree .off { color: #c4c4c4; }

/* drawing area */
.canvas { position: relative; flex: 1; background: #2f2e35; overflow: hidden; }
.model { position: absolute; inset: 0; width: 100%; height: 100%; }
.edge { stroke: #22122a; stroke-width: 5px; }
.edge * { vector-effect: non-scaling-stroke; }
.edge path, .edge ellipse { stroke: #1c141e; stroke-width: 1px; }
.edge path:not([fill]) { fill: none; }
.edge .nb, .edge .nb ellipse { stroke: none; }
.edge .thick { stroke-width: 2px; }
.edge .cy { stroke: #8b8be0; stroke-width: 2px; }
.edge .tip { stroke: #4fb2e6; }
.edge .blue { stroke: #3b6ee8; stroke-dasharray: 3 2; }
.edge .slot { stroke: inherit; stroke-width: inherit; stroke-linecap: round; }
.edge .slotin { stroke: #8d4f91; stroke-width: 3px; }
.float {
  position: absolute;
  left: 44%;
  top: 6px;
  display: flex;
  padding: 0 5px 0 3px;
  border: 1px solid #999;
  background: #e0e0e0;
  color: #444;
}
.float button { position: relative; justify-content: center; width: 35px; height: 38px; }
.float svg { width: 22px; height: 22px; }
.float .drop::after {
  content: "";
  position: absolute;
  right: 3px;
  bottom: 6px;
  border: 3px solid #555;
  border-top-color: transparent;
  border-left-color: transparent;
}
.style { position: absolute; left: 10px; bottom: 143px; color: #77767c; font-size: 16px; }

/* status bar */
.status {
  display: flex;
  align-items: center;
  gap: 6px;
  height: 53px;
  padding: 8px 0 0 3px;
  border-top: 2px solid #666;
  border-bottom: 2px solid #666;
  background: #dfdfdf;
  overflow: hidden;
}
.status button svg { width: 24px; height: 24px; }
.status > button:not(.pressed) { padding: 0 2px; }
.status .pressed { justify-content: center; width: 30px; height: 30px; border: 1px solid #999; background: #cbcbcb; }
.status .sv { width: 1px; height: 30px; margin: 0 1px 0 6px; background: #aaa; }
.status p { display: flex; gap: 7px; padding-bottom: 18px; font-size: 16px; }
.dot { width: 7px; height: 7px; margin-top: 6px; border-radius: 50%; background: #176890; }
.right { display: flex; align-items: flex-start; align-self: stretch; margin: -8px -36px 0 auto; }
.right .sv { height: 46px; margin: 0 3px 0 0; }
.right .gap { margin-left: 52px; }
.right .find { height: 38px; margin: 0 3px 0 0; padding-left: 6px; gap: 7px; background: #f6f7fa; }
.right .find span { display: flex; align-items: center; height: 38px; padding: 0 4px; border-left: 1px solid #ddd; }
.right .box { justify-content: center; width: 54px; height: 43px; border: 1px solid #bbb; background: #f4f4f4; }
.right .box svg { height: 28px; }
.right select {
  width: 108px;
  height: 30px;
  margin: 10px 0 0 131px;
  padding: 0 9px;
  border: 1px solid #bbb;
  background: #f4f4f4;
  color: #555;
  font: inherit;
  appearance: none;
}

/* on-screen keyboard window */
.osk {
  position: absolute;
  right: -50px;
  bottom: 44px;
  width: 780px;
  padding: 0 12px 12px 11px;
  border: 1px solid #7f8a83;
  border-radius: 7px;
  background:
    linear-gradient(transparent calc(100% - 13px), #6b8570 calc(100% - 10px), #bfdcbb calc(100% - 4px), #a8c6a4),
    linear-gradient(135deg, #59605d 0, #4a524e 90px, #2d332f 150px, #2c312e 100%);
  box-shadow: 0 0 3px #111;
}
.osk header { display: flex; align-items: center; gap: 5px; height: 81px; padding: 0 0 42px 8px; margin-left: -11px; }
.osk header svg { width: 22px; height: 22px; }
.osk h2 { color: #111; background: #929795; border-radius: 8px; box-shadow: 0 0 6px 4px #929795; line-height: 16px; font-size: 17px; }
.keys { display: flex; flex-direction: column; gap: 5px; }
.row { display: flex; gap: 6px; }
.row button {
  position: relative;
  flex: 1 1 40px;
  align-items: flex-start;
  height: 34px;
  min-width: 0;
  padding: 0 3px;
  border: 1px solid #141414;
  border-top-color: #777;
  border-radius: 4px;
  background: linear-gradient(#3f3f3f, #272727 50%, #0c0c0c);
  color: #fff;
  font-size: 21px;
  line-height: 25px;
}
.row .two { justify-content: space-between; padding-right: 8px; line-height: 44px; }
.row sup { color: #999; font-size: 16px; line-height: 20px; }
.row small { color: #ccc; font-size: 14px; line-height: 14px; }
.row svg { width: 14px; height: 14px; margin-top: 2px; }
.row .ent { width: 30px; }
.row .lit { background: #fff; color: #111; }
.row .k40 { flex: 0 0 40px; }
.row .k64 { flex: 0 0 64px; }
.row .k66 { flex: 0 0 66px; }
.row .k70 { flex: 0 0 70px; }
.row .k86 { flex: 0 0 86px; }
.row .k92 { flex: 0 0 92px; }
.row .k110 { flex: 0 0 110px; }
.row .k114 { flex: 0 0 114px; }
.row .k134 { flex: 0 0 134px; }
.row .k137 { flex: 0 0 137px; }
```
